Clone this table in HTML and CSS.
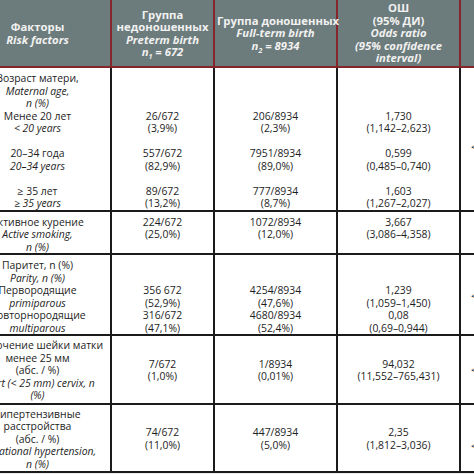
FILE: index.html
```html
<!DOCTYPE html>
<html lang="ru">
<head>
<meta charset="utf-8">
<title>Факторы риска</title>
<link rel="stylesheet" href="styles.css">
</head>
<body>
<table class="t">
  <colgroup>
    <col class="c1"><col class="c2"><col class="c3"><col class="c4"><col class="c5">
  </colgroup>
  <thead>
    <tr>
      <th>Факторы<br><i>Risk factors</i></th>
      <th>Группа<br>недоношенных<br><i>Preterm birth</i><br><i>n<sub>1</sub> = 672</i></th>
      <th>Группа доношенных<br><i>Full-term birth</i><br><i>n<sub>2</sub> = 8934</i></th>
      <th>ОШ<br>(95% ДИ)<br><i>Odds ratio</i><br><i>(95% confidence</i><br><i>interval)</i></th>
      <th>p</th>
    </tr>
  </thead>
  <tbody>
    <tr>
      <td>Возраст матери,<br><i>Maternal age,</i><br><i>n (%)</i><br>Менее 20 лет<br><i>&lt; 20 years</i><br><br>20–34 года<br><i>20–34 years</i><br><br>≥ 35 лет<br><i>≥ 35 years</i></td>
      <td><br><br><br>26/672<br>(3,9%)<br><br>557/672<br>(82,9%)<br><br>89/672<br>(13,2%)</td>
      <td><br><br><br>206/8934<br>(2,3%)<br><br>7951/8934<br>(89,0%)<br><br>777/8934<br>(8,7%)</td>
      <td><br><br><br>1,730<br>(1,142–2,623)<br><br>0,599<br>(0,485–0,740)<br><br>1,603<br>(1,267–2,027)</td>
      <td class="p p-low">&lt;0,001</td>
    </tr>
    <tr>
      <td>Активное курение<br><i>Active smoking,</i><br><i>n (%)</i></td>
      <td>224/672<br>(25,0%)</td>
      <td>1072/8934<br>(12,0%)</td>
      <td>3,667<br>(3,086–4,358)</td>
      <td class="p"></td>
    </tr>
    <tr>
      <td>Паритет, n (%)<br><i>Parity, n (%)</i><br>Первородящие<br><i>primiparous</i><br>Повторнородящие<br><i>multiparous</i></td>
      <td><br><br>356 672<br>(52,9%)<br>316/672<br>(47,1%)</td>
      <td><br><br>4254/8934<br>(47,6%)<br>4680/8934<br>(52,4%)</td>
      <td><br><br>1,239<br>(1,059–1,450)<br>0,08<br>(0,69–0,944)</td>
      <td class="p">&lt;0,001</td>
    </tr>
    <tr class="mid">
      <td>Укорочение шейки матки<br>менее 25 мм<br>(абс. / %)<br><i>Short (&lt; 25 mm) cervix, n</i><br><i>(%)</i></td>
      <td>7/672<br>(1,0%)</td>
      <td>1/8934<br>(0,01%)</td>
      <td>94,032<br>(11,552–765,431)</td>
      <td class="p">&lt;0,001</td>
    </tr>
    <tr class="mid">
      <td>Гипертензивные<br>расстройства<br>(абс. / %)<br><i>Gestational hypertension,</i><br><i>n (%)</i></td>
      <td>74/672<br>(11,0%)</td>
      <td>447/8934<br>(5,0%)</td>
      <td>2,35<br>(1,812–3,036)</td>
      <td class="p p-low">&lt;0,001</td>
    </tr>
  </tbody>
</table>
</body>
</html>
```
FILE: styles.css
```css
html, body {
  margin: 0;
  padding: 0;
  background: #ebebeb;
  overflow: hidden;
}

.t {
  border-collapse: collapse;
  table-layout: fixed;
  width: 596px;
  margin-left: -37px;
  font-family: "Open Sans", "Noto Sans", sans-serif;
  font-size: 10.4px;
  line-height: 12.5px;
  color: #1d1d1d;
}

.c1 { width: 147px; }
.c2 { width: 103px; }
.c3 { width: 123px; }
.c4 { width: 123px; }
.c5 { width: 100px; }

.t th {
  background: #6c7b7b;
  color: #f1f1f1;
  font-size: 11.3px;
  line-height: 12.4px;
  font-weight: 700;
  border: 2px solid #85262a;
  border-top: none;
  padding: 2px 2px 1px;
  height: 63px;
  text-align: center;
  vertical-align: middle;
  white-space: nowrap;
}

.t th sub {
  font-size: 7px;
  line-height: 0;
}

.t td {
  background: #ffffff;
  border: 2px solid #1b1b1b;
  padding: 4px 2px 0;
  text-align: center;
  vertical-align: top;
  white-space: nowrap;
}

.t .mid td {
  vertical-align: middle;
  padding-top: 3px;
  padding-bottom: 1px;
}

.t td.p {
  text-align: left;
  padding-left: 10px;
  vertical-align: middle;
}

.t td.p-low {
  padding-top: 17px;
}
```
